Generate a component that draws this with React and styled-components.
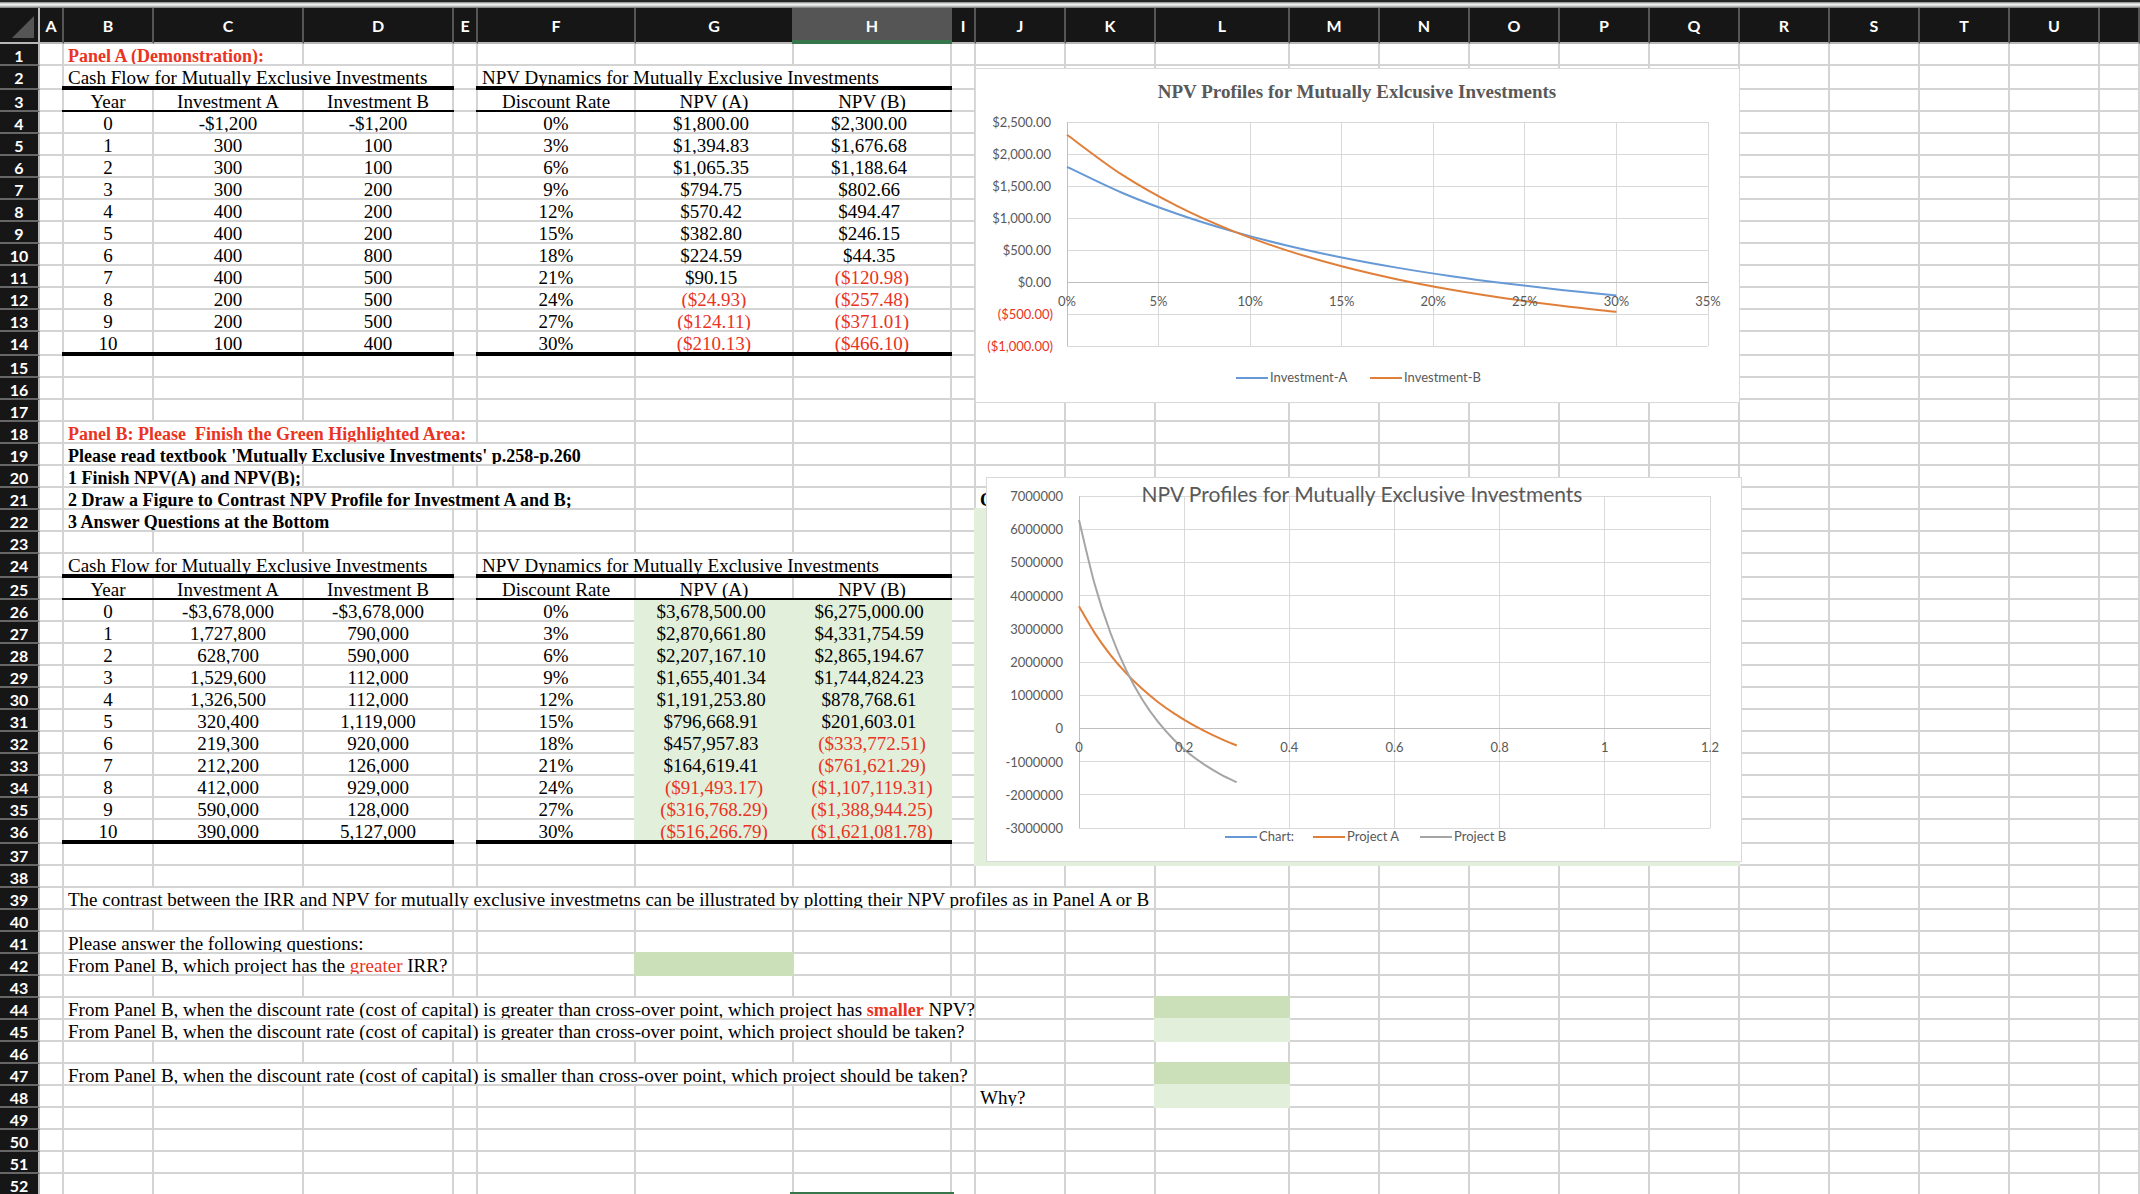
import React, { Component } from 'react';
import styled, { createGlobalStyle, css } from 'styled-components';

const GlobalStyle = createGlobalStyle`
  html, body, #root {
    height: 100%;
    margin: 0;
  }
  body {
    overflow: hidden;
    background: #fff;
  }
`;

const SERIF = '"Liberation Serif", "Times New Roman", serif';
const SANS = 'Lato, Carlito, sans-serif';
const RED = '#ea3323';
const GREEN = '#e2efda';
const DARK_GREEN = '#cbe0b8';
const GRID = '#d4d4d4';

const Page = styled.main`
  min-height: 100%;
  background: #fff;
`;

const TopEdge = styled.div`
  height: 8px;
  background: linear-gradient(
    #262626 2px, #999 2px 3px, #d0d2d1 3px 4px, #eef0ef 4px 5px,
    #d8dad9 5px 6px, #b8b8b8 6px 7px, #888 7px
  );
`;

const Workbook = styled.div`
  position: relative;
`;

const Sheet = styled.table`
  width: 100%;
  table-layout: fixed;
  border-collapse: separate;
  border-spacing: 0;
  font-family: ${SERIF};
  font-size: 19px;
  color: #000;
`;

const Col = styled.col`
  width: ${p => (p.$width ? p.$width + 'px' : 'auto')};
`;

const ColumnHead = styled.th`
  position: relative;
  box-sizing: border-box;
  height: 36px;
  padding: 2px 0 0;
  border-right: 2px solid #555;
  border-bottom: 2px solid #b8b8b8;
  background: ${p => (p.$active ? '#555' : '#161616')};
  color: #fff;
  font: 700 16px/32px ${SANS};
  text-align: center;
  ${p => p.$active && css`
    &::after {
      content: '';
      position: absolute;
      left: -2px;
      right: -2px;
      bottom: -2px;
      height: 4px;
      background: #37764a;
    }
  `}
`;

const Corner = styled(ColumnHead)`
  padding: 0;
  border-right-color: #b8b8b8;
  svg {
    display: block;
    margin: 8px 4px 4px auto;
  }
`;

const RowHead = styled.th`
  padding: 0;
  border-right: 2px solid #b8b8b8;
  border-bottom: 2px solid #666;
  background: #161616;
  color: #fff;
  font-family: ${SANS};
  font-size: 16px;
  font-weight: 700;
  text-align: center;
  vertical-align: top;
`;

const Cell = styled.td`
  position: relative;
  padding: 0;
  border-right: 2px solid ${p => p.$fill || GRID};
  border-bottom: 2px solid ${p => p.$fill || GRID};
  text-align: ${p => p.$align || 'left'};
  font-size: ${p => (p.$bold ? 18 : 19)}px;
  font-weight: ${p => (p.$bold ? 700 : 400)};
  color: ${p => (p.$red ? RED : '#000')};
  vertical-align: top;
  ${p => p.$fill && css`
    background: ${p.$fill};
    box-shadow: -2px 0 0 ${p.$fill}
      ${p.$open ? '' : `, 0 -2px 0 ${p.$fill}, -2px -2px 0 ${p.$fill}`};
  `}
  ${p => p.$rule && css`
    &::after {
      content: '';
      position: absolute;
      z-index: 1;
      left: -2px;
      right: -2px;
      bottom: -2px;
      height: ${p.$rule}px;
      background: #000;
    }
  `}
  ${p => p.$cursor && css`
    &::after {
      content: '';
      position: absolute;
      z-index: 1;
      left: -4px;
      right: -4px;
      bottom: 0;
      height: 2px;
      background: #37764a;
    }
  `}
`;

const Content = styled.div`
  height: ${p => (p.$tall ? 22 : 20)}px;
  padding: 0 ${p => (p.$paren ? 6 : 0)}px 0 ${p => (p.$indent ? 4 : 0)}px;
  overflow-x: visible;
  overflow-y: ${p => (p.$open ? 'visible' : 'clip')};
  line-height: 24px;
  white-space: pre;
`;

const RowNumber = styled.div`
  height: ${p => (p.$tall ? 22 : 20)}px;
  line-height: 24px;
`;

const Mark = styled.span`
  color: ${RED};
  font-size: ${p => (p.$bold ? 18 : 19)}px;
  font-weight: ${p => (p.$bold ? 700 : 400)};
`;

const ChartFrame = styled.figure`
  position: absolute;
  z-index: 2;
  left: ${p => p.$left}px;
  top: ${p => p.$top}px;
  margin: 0;
  border: 1px solid #d9d9d9;
  background: #fff;
  svg {
    display: block;
  }
`;

const ChartTitle = styled.text`
  fill: #595959;
  font-family: ${p => (p.$serif ? SERIF : SANS)};
  font-size: ${p => (p.$serif ? 19 : 21)}px;
  font-weight: ${p => (p.$serif ? 700 : 400)};
  text-anchor: middle;
`;

const Label = styled.text`
  fill: ${p => (p.$red ? RED : '#595959')};
  font-family: ${SANS};
  font-size: 13px;
  text-anchor: ${p => p.$anchor || 'start'};
`;

const COLUMNS = [
  ['A', 24], ['B', 90], ['C', 150], ['D', 150], ['E', 24], ['F', 158],
  ['G', 158], ['H', 158], ['I', 24], ['J', 90], ['K', 90], ['L', 134],
  ['M', 90], ['N', 90], ['O', 90], ['P', 90], ['Q', 90], ['R', 90],
  ['S', 90], ['T', 90], ['U', 90], ['', 0],
];

const TALL_ROWS = [2, 14, 24, 36];

const RATES = ['0%', '3%', '6%', '9%', '12%', '15%', '18%', '21%', '24%', '27%', '30%'];

const PANEL_A = {
  first: 2,
  a: ['-$1,200', '300', '300', '300', '400', '400', '400', '400', '200', '200', '100'],
  b: ['-$1,200', '100', '100', '200', '200', '200', '800', '500', '500', '500', '400'],
  npvA: ['$1,800.00', '$1,394.83', '$1,065.35', '$794.75', '$570.42', '$382.80',
    '$224.59', '$90.15', '($24.93)', '($124.11)', '($210.13)'],
  npvB: ['$2,300.00', '$1,676.68', '$1,188.64', '$802.66', '$494.47', '$246.15',
    '$44.35', '($120.98)', '($257.48)', '($371.01)', '($466.10)'],
};

const PANEL_B = {
  first: 24,
  fill: GREEN,
  a: ['-$3,678,000', '1,727,800', '628,700', '1,529,600', '1,326,500', '320,400',
    '219,300', '212,200', '412,000', '590,000', '390,000'],
  b: ['-$3,678,000', '790,000', '590,000', '112,000', '112,000', '1,119,000',
    '920,000', '126,000', '929,000', '128,000', '5,127,000'],
  npvA: ['$3,678,500.00', '$2,870,661.80', '$2,207,167.10', '$1,655,401.34',
    '$1,191,253.80', '$796,668.91', '$457,957.83', '$164,619.41', '($91,493.17)',
    '($316,768.29)', '($516,266.79)'],
  npvB: ['$6,275,000.00', '$4,331,754.59', '$2,865,194.67', '$1,744,824.23',
    '$878,768.61', '$201,603.01', '($333,772.51)', '($761,621.29)',
    '($1,107,119.31)', '($1,388,944.25)', '($1,621,081.78)'],
};

const toNumber = text => {
  const value = Number(text.replace(/[^0-9.]/g, ''));
  return text.startsWith('(') ? -value : value;
};

const CELLS = {
  B1: { text: 'Panel A (Demonstration):', span: 2, bold: true, red: true },
  B18: { text: 'Panel B: Please  Finish the Green Highlighted Area:', span: 4, bold: true, red: true },
  B19: { text: "Please read textbook 'Mutually Exclusive Investments' p.258-p.260", span: 5, bold: true },
  B20: { text: '1 Finish NPV(A) and NPV(B);', span: 2, bold: true },
  B21: { text: '2 Draw a Figure to Contrast NPV Profile for Investment A and B;', span: 5, bold: true },
  B22: { text: '3 Answer Questions at the Bottom', span: 3, bold: true },
  J21: { text: 'Chart:', bold: true },
  B39: {
    text: 'The contrast between the IRR and NPV for mutually exclusive investmetns can be illustrated by plotting their NPV profiles as in Panel A or B',
    span: 10,
  },
  B41: { text: 'Please answer the following questions:', span: 3 },
  B42: { text: <>From Panel B, which project has the <Mark>greater</Mark> IRR?</>, span: 3 },
  G42: { fill: DARK_GREEN },
  B44: {
    text: <>From Panel B, when the discount rate (cost of capital) is greater than cross-over point, which project has <Mark $bold>smaller</Mark> NPV?</>,
    span: 8,
  },
  L44: { fill: DARK_GREEN },
  B45: {
    text: 'From Panel B, when the discount rate (cost of capital) is greater than cross-over point, which project should be taken?',
    span: 8,
  },
  L45: { fill: GREEN },
  B47: {
    text: 'From Panel B, when the discount rate (cost of capital) is smaller than cross-over point, which project should be taken?',
    span: 8,
  },
  L47: { fill: DARK_GREEN },
  J48: { text: 'Why?' },
  L48: { fill: GREEN },
  H52: { cursor: true },
};

const addPanel = panel => {
  const top = panel.first;
  CELLS['B' + top] = { text: 'Cash Flow for Mutually Exclusive Investments', span: 3, rule: 4 };
  CELLS['F' + top] = { text: 'NPV Dynamics for Mutually Exclusive Investments', span: 3, rule: 4 };
  const heads = { B: 'Year', C: 'Investment A', D: 'Investment B', F: 'Discount Rate', G: 'NPV (A)', H: 'NPV (B)' };
  Object.keys(heads).forEach(col => {
    CELLS[col + (top + 1)] = { text: heads[col], align: 'center', rule: 2 };
  });
  RATES.forEach((rate, i) => {
    const values = { B: String(i), C: panel.a[i], D: panel.b[i], F: rate, G: panel.npvA[i], H: panel.npvB[i] };
    Object.keys(values).forEach(col => {
      const text = values[col];
      const isNpv = col === 'G' || col === 'H';
      CELLS[col + (top + 2 + i)] = {
        text,
        align: 'center',
        red: text.startsWith('('),
        paren: isNpv && !text.startsWith('('),
        fill: isNpv ? panel.fill : undefined,
        open: isNpv && Boolean(panel.fill),
        rule: i === 10 ? 4 : 0,
      };
    });
  });
};

addPanel(PANEL_A);
addPanel(PANEL_B);

// area reserved for the student's chart
for (let row = 22; row <= 37; row++) {
  'JKLMNOPQ'.split('').forEach(col => {
    CELLS[col + row] = { fill: GREEN };
  });
}

const smoothPath = points => points.reduce((d, p, i) => {
  if (i === 0) return `M${p[0]},${p[1]}`;
  const p0 = points[i - 2] || points[i - 1];
  const p1 = points[i - 1];
  const p3 = points[i + 1] || p;
  const c1 = [p1[0] + (p[0] - p0[0]) / 6, p1[1] + (p[1] - p0[1]) / 6];
  const c2 = [p[0] - (p3[0] - p1[0]) / 6, p[1] - (p3[1] - p1[1]) / 6];
  return `${d}C${c1},${c2},${p}`;
}, '');

class ProfileChart extends Component {
  render() {
    const { left, top, width, height, title, serif, titleX, titleY, plot, xMax, xLabels, yMin, yMax, yLabels, series, legend, legendY } = this.props;
    const x = v => plot.x + (v / xMax) * plot.width;
    const y = v => plot.y + ((yMax - v) / (yMax - yMin)) * plot.height;
    const line = v => Math.floor(v) + 0.5;
    const right = plot.x + plot.width;
    const bottom = plot.y + plot.height;

    return (
      <ChartFrame $left={left} $top={top}>
        <svg width={width} height={height} role="img" aria-label={title}>
          <g stroke="#d9d9d9">
            {yLabels.map((label, i) => {
              const at = line(plot.y + (i * plot.height) / (yLabels.length - 1));
              return <line key={label} x1={plot.x} x2={right} y1={at} y2={at} />;
            })}
            {xLabels.map((label, i) => {
              const at = line(plot.x + (i * plot.width) / (xLabels.length - 1));
              return <line key={label} x1={at} x2={at} y1={plot.y} y2={bottom} />;
            })}
          </g>
          <g stroke="#bfbfbf">
            <line x1={line(plot.x)} x2={line(plot.x)} y1={plot.y} y2={bottom} />
            <line x1={plot.x} x2={right} y1={line(y(0))} y2={line(y(0))} />
          </g>
          {series.map(s => (
            <path
              key={s.color}
              d={smoothPath(s.values.map((v, i) => [x(i * 0.03), y(toNumber(v))]))}
              fill="none"
              stroke={s.color}
              strokeWidth="2"
            />
          ))}
          {yLabels.map((label, i) => (
            <Label
              key={label}
              $anchor="end"
              $red={label.startsWith('(')}
              x={plot.x - (label.startsWith('(') ? 14 : 16)}
              y={plot.y + (i * plot.height) / (yLabels.length - 1) + 5}
            >
              {label}
            </Label>
          ))}
          {xLabels.map((label, i) => (
            <Label
              key={label}
              $anchor="middle"
              x={plot.x + (i * plot.width) / (xLabels.length - 1)}
              y={y(0) + 24}
            >
              {label}
            </Label>
          ))}
          <ChartTitle $serif={serif} x={titleX} y={titleY}>{title}</ChartTitle>
          {legend.map(item => (
            <g key={item.name}>
              <line x1={item.x} x2={item.x + 32} y1={legendY} y2={legendY} stroke={item.color} strokeWidth="2" />
              <Label x={item.x + 34} y={legendY + 4}>{item.name}</Label>
            </g>
          ))}
        </svg>
      </ChartFrame>
    );
  }
}

class SheetRow extends Component {
  renderCells(row) {
    const tall = TALL_ROWS.includes(row);
    const cells = [];
    let i = 0;
    while (i < COLUMNS.length) {
      const name = COLUMNS[i][0];
      const data = CELLS[name + row] || {};
      cells.push(
        <Cell
          key={i}
          colSpan={data.span || 1}
          $align={data.align}
          $bold={data.bold}
          $red={data.red}
          $fill={data.fill}
          $open={data.open}
          $rule={data.rule}
          $cursor={data.cursor}
        >
          <Content $tall={tall} $open={data.open} $paren={data.paren} $indent={!data.align}>{data.text}</Content>
        </Cell>
      );
      i += data.span || 1;
    }
    return cells;
  }

  render() {
    const { row } = this.props;
    return (
      <tr>
        <RowHead scope="row">
          <RowNumber $tall={TALL_ROWS.includes(row)}>{row}</RowNumber>
        </RowHead>
        {this.renderCells(row)}
      </tr>
    );
  }
}

class App extends Component {
  render() {
    const rows = Array.from({ length: 52 }, (_, i) => i + 1);

    return (
      <Page>
        <GlobalStyle />
        <TopEdge />
        <Workbook>
          <Sheet>
            <colgroup>
              <Col $width={40} />
              {COLUMNS.map(([name, width]) => <Col key={name} $width={width} />)}
            </colgroup>
            <thead>
              <tr>
                <Corner aria-label="Select all">
                  <svg width="22" height="22" viewBox="0 0 22 22">
                    <path d="M22 0V22H0Z" fill="#555" />
                  </svg>
                </Corner>
                {COLUMNS.map(([name]) => (
                  <ColumnHead key={name} scope="col" $active={name === 'H'}>{name}</ColumnHead>
                ))}
              </tr>
            </thead>
            <tbody>
              {rows.map(row => <SheetRow key={row} row={row} />)}
            </tbody>
          </Sheet>
          <ProfileChart
            left={975}
            top={60}
            width={763}
            height={333}
            title="NPV Profiles for Mutually Exlcusive Investments"
            serif
            titleX={381}
            titleY={29}
            plot={{ x: 91, y: 53, width: 641, height: 224 }}
            xMax={0.35}
            xLabels={['0%', '5%', '10%', '15%', '20%', '25%', '30%', '35%']}
            yMin={-1000}
            yMax={2500}
            yLabels={['$2,500.00', '$2,000.00', '$1,500.00', '$1,000.00', '$500.00', '$0.00', '($500.00)', '($1,000.00)']}
            series={[
              { color: '#6699d5', values: PANEL_A.npvA },
              { color: '#e07f3a', values: PANEL_A.npvB },
            ]}
            legendY={309}
            legend={[
              { name: 'Investment-A', x: 260, color: '#6699d5' },
              { name: 'Investment-B', x: 394, color: '#e07f3a' },
            ]}
          />
          <ProfileChart
            left={986}
            top={469}
            width={754}
            height={383}
            title="NPV Profiles for Mutually Exclusive Investments"
            titleX={375}
            titleY={24}
            plot={{ x: 92, y: 18, width: 631, height: 332 }}
            xMax={1.2}
            xLabels={['0', '0.2', '0.4', '0.6', '0.8', '1', '1.2']}
            yMin={-3000000}
            yMax={7000000}
            yLabels={['7000000', '6000000', '5000000', '4000000', '3000000', '2000000', '1000000', '0', '-1000000', '-2000000', '-3000000']}
            series={[
              { color: '#e07f3a', values: PANEL_B.npvA },
              { color: '#a5a5a5', values: PANEL_B.npvB },
            ]}
            legendY={359}
            legend={[
              { name: 'Chart:', x: 238, color: '#6699d5' },
              { name: 'Project A', x: 326, color: '#e07f3a' },
              { name: 'Project B', x: 433, color: '#a5a5a5' },
            ]}
          />
        </Workbook>
      </Page>
    );
  }
}

export default App;
